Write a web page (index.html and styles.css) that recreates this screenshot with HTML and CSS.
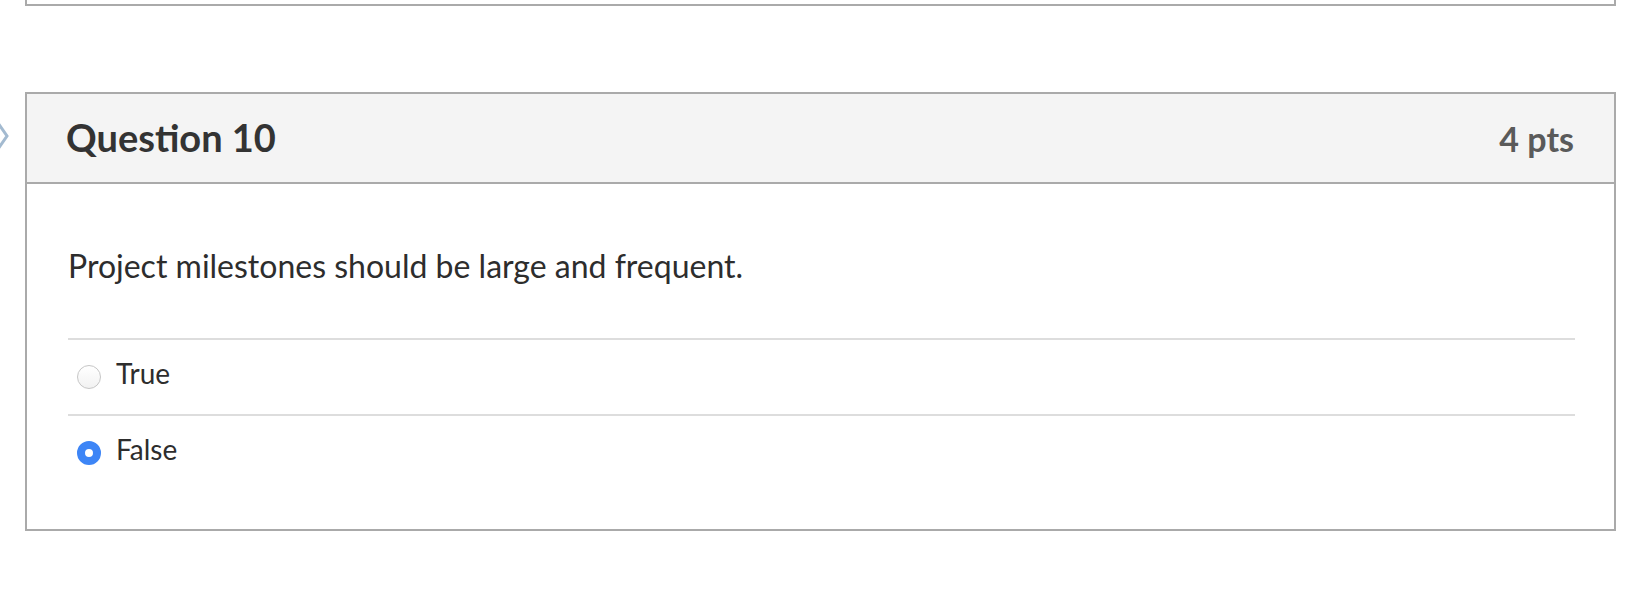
FILE: index.html
```html
<!DOCTYPE html>
<html>
<head>
<meta charset="utf-8">
<link rel="stylesheet" href="styles.css">
</head>
<body>
<div class="page">
  <div class="prev-card"></div>
  <div class="question-wrap">
    <svg class="flag" width="12" height="28" viewBox="0 0 12 28"><polyline points="-2,1 7,14 -2,27" fill="none" stroke="#a3bad0" stroke-width="3"/></svg>
    <div class="card">
      <div class="card-header">
        <h2 class="title">Question 10</h2>
        <span class="pts">4 pts</span>
      </div>
      <div class="card-body">
        <p class="question-text">Project milestones should be large and frequent.</p>
        <div class="answers">
          <label class="answer">
            <span class="radio"></span>
            <span class="answer-label">True</span>
          </label>
          <label class="answer">
            <span class="radio checked"></span>
            <span class="answer-label">False</span>
          </label>
        </div>
      </div>
    </div>
  </div>
</div>
</body>
</html>
```

FILE: styles.css
```css
html, body {
  margin: 0;
  padding: 0;
  background: #ffffff;
}
body {
  font-family: "Lato", "Liberation Sans", sans-serif;
  color: #2d2d2d;
}
.page {
  padding-left: 25px;
  width: 1591px;
}
.prev-card {
  height: 4px;
  border: 2px solid #aaaaaa;
  border-top: none;
}
.question-wrap {
  position: relative;
  margin-top: 86px;
}
.flag {
  position: absolute;
  left: -25px;
  top: 30px;
}
.card {
  border: 2px solid #aaaaaa;
  background: #ffffff;
}
.card-header {
  height: 88px;
  background: #f4f4f4;
  border-bottom: 2px solid #aaaaaa;
  display: flex;
  align-items: center;
  justify-content: space-between;
  padding: 0 40px 0 39px;
}
.title {
  margin: 0;
  font-size: 38px;
  font-weight: 700;
  color: #333333;
  line-height: 1.2;
}
.pts {
  font-size: 34px;
  font-weight: 700;
  color: #5a5a5a;
  line-height: 1.2;
  padding-top: 2px;
}
.card-body {
  padding: 58px 39px 39px 41px;
}
.question-text {
  margin: 0 0 48px 0;
  font-size: 32px;
  line-height: 48px;
  color: #2d2d2d;
}
.answer {
  display: flex;
  align-items: center;
  height: 74px;
  border-top: 2px solid #dddddd;
}
.radio {
  box-sizing: border-box;
  width: 24px;
  height: 24px;
  border-radius: 50%;
  border: 1.5px solid #c6c6c6;
  background: linear-gradient(#ffffff, #f2f2f2);
  margin-left: 9px;
  margin-right: 15px;
}
.radio.checked {
  border: 8px solid #3d85f6;
  background: #ffffff;
}
.answer-label {
  font-size: 28px;
  line-height: 1.2;
  margin-bottom: 6px;
  color: #2d2d2d;
}
```
